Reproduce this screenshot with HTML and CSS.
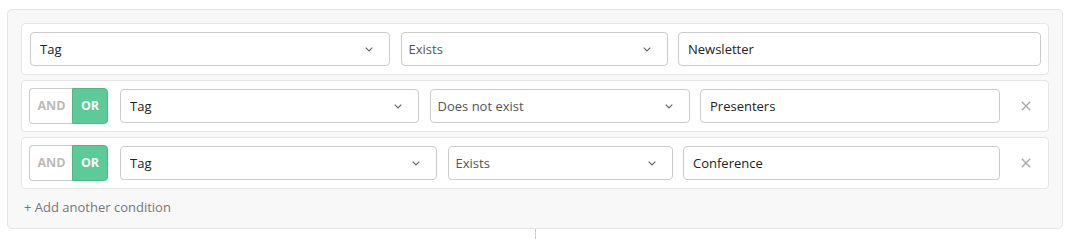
FILE: index.html
```html
<!DOCTYPE html>
<html lang="en">
<head>
<meta charset="utf-8">
<title>Conditions</title>
<link rel="stylesheet" href="styles.css">
</head>
<body>
<div class="wrap">
  <div class="panel">
    <div class="rows">
      <div class="row">
        <div class="fields fields-1">
          <div class="field select field-key"><span>Tag</span><svg class="chev" viewBox="0 0 8 5" width="8" height="5"><path d="M0.7 0.7 L4 4 L7.3 0.7" /></svg></div>
          <div class="field select field-op"><span>Exists</span><svg class="chev" viewBox="0 0 8 5" width="8" height="5"><path d="M0.7 0.7 L4 4 L7.3 0.7" /></svg></div>
          <div class="field field-value"><span>Newsletter</span></div>
        </div>
      </div>
      <div class="row">
        <div class="toggle"><span class="t-and">AND</span><span class="t-or">OR</span></div>
        <div class="fields fields-2">
          <div class="field select field-key"><span>Tag</span><svg class="chev" viewBox="0 0 8 5" width="8" height="5"><path d="M0.7 0.7 L4 4 L7.3 0.7" /></svg></div>
          <div class="field select field-op"><span>Does not exist</span><svg class="chev" viewBox="0 0 8 5" width="8" height="5"><path d="M0.7 0.7 L4 4 L7.3 0.7" /></svg></div>
          <div class="field field-value"><span>Presenters</span></div>
        </div>
        <div class="remove"><svg viewBox="0 0 10 10" width="10" height="10"><path d="M0.8 0.8 L9.2 9.2 M9.2 0.8 L0.8 9.2" /></svg></div>
      </div>
      <div class="row">
        <div class="toggle"><span class="t-and">AND</span><span class="t-or">OR</span></div>
        <div class="fields fields-3">
          <div class="field select field-key"><span>Tag</span><svg class="chev" viewBox="0 0 8 5" width="8" height="5"><path d="M0.7 0.7 L4 4 L7.3 0.7" /></svg></div>
          <div class="field select field-op"><span>Exists</span><svg class="chev" viewBox="0 0 8 5" width="8" height="5"><path d="M0.7 0.7 L4 4 L7.3 0.7" /></svg></div>
          <div class="field field-value"><span>Conference</span></div>
        </div>
        <div class="remove"><svg viewBox="0 0 10 10" width="10" height="10"><path d="M0.8 0.8 L9.2 9.2 M9.2 0.8 L0.8 9.2" /></svg></div>
      </div>
    </div>
    <div class="add">+ Add another condition</div>
  </div>
  <div class="connector"></div>
</div>
</body>
</html>
```
FILE: styles.css
```css
html, body {
  margin: 0;
  padding: 0;
  background: #ffffff;
}
body {
  font-family: "Open Sans", "Liberation Sans", sans-serif;
  font-size: 13px;
  color: #222222;
}
.wrap {
  padding: 9px 9px 0 7px;
}
.panel {
  background: #f8f8f8;
  border: 1px solid #e4e4e4;
  border-radius: 5px;
  padding: 13px 13px 12px 13px;
}
.rows {
  display: flex;
  flex-direction: column;
  gap: 5px;
}
.row {
  background: #ffffff;
  border: 1px solid #e6e6e6;
  border-radius: 4px;
  padding: 7px 7px 7px 8px;
  height: 36px;
  display: flex;
  align-items: center;
}
.fields {
  flex: 1;
  display: grid;
  column-gap: 10.5px;
  align-items: center;
}
.fields-1 { grid-template-columns: 360fr 267fr 363fr; }
.fields-2 { grid-template-columns: 299fr 260fr 300fr; }
.fields-3 { grid-template-columns: 317fr 225fr 317fr; }
.field {
  box-sizing: border-box;
  height: 34px;
  border: 1px solid #cccccc;
  border-radius: 4px;
  background: #ffffff;
  display: flex;
  align-items: center;
  padding: 0 9px;
  min-width: 0;
  white-space: nowrap;
  line-height: 18px;
}
.field span {
  flex: 1;
  overflow: hidden;
}
.select {
  padding-right: 16px;
}
.field-op {
  padding-left: 7px;
  color: #555555;
}
.chev {
  flex: none;
  fill: none;
  stroke: #666666;
  stroke-width: 1.2;
}
.toggle {
  flex: none;
  box-sizing: border-box;
  height: 36px;
  width: 79px;
  margin-left: -1px;
  margin-right: 12px;
  display: flex;
  font-weight: 700;
  font-size: 12.5px;
  line-height: 18px;
}
.t-and {
  box-sizing: border-box;
  width: 43px;
  border: 1px solid #cccccc;
  border-right: none;
  border-radius: 4px 0 0 4px;
  color: #bbbbbb;
  display: flex;
  align-items: center;
  justify-content: center;
  padding-left: 1px;
}
.t-or {
  box-sizing: border-box;
  width: 36px;
  background: #5dcb98;
  border: 1px solid #4fb786;
  border-radius: 0 4px 4px 0;
  color: #ffffff;
  display: flex;
  align-items: center;
  justify-content: center;
}
.remove {
  flex: none;
  width: 20px;
  height: 20px;
  margin-left: 16px;
  margin-right: 5px;
  display: flex;
  align-items: center;
  justify-content: center;
}
.remove svg {
  fill: none;
  stroke: #aaaaaa;
  stroke-width: 1.4;
}
.add {
  margin-top: 9px;
  margin-left: 3px;
  line-height: 18px;
  color: #777777;
}
.connector {
  width: 0;
  height: 10px;
  margin-left: 528px;
  border-left: 1px dashed #c8c8c8;
}
```
